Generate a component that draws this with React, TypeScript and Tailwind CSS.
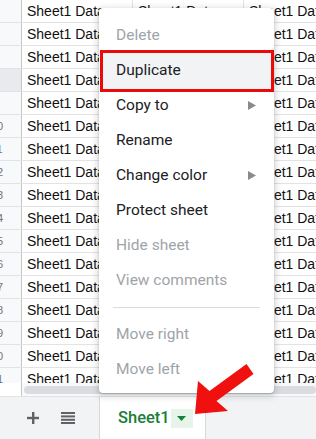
import React from "react";

const rowNumbers = [5, 6, 7, 8, 9, 10, 11, 12, 13, 14, 15, 16, 17, 18, 19, 20, 21];

type Item = { label: string; disabled?: boolean; sub?: boolean };

const topItems: Item[] = [
  { label: "Delete", disabled: true },
  { label: "Duplicate" },
  { label: "Copy to", sub: true },
  { label: "Rename" },
  { label: "Change color", sub: true },
  { label: "Protect sheet" },
  { label: "Hide sheet", disabled: true },
  { label: "View comments", disabled: true },
];

const bottomItems: Item[] = [
  { label: "Move right", disabled: true },
  { label: "Move left", disabled: true },
];

function MenuItem({ label, disabled, sub }: Item) {
  return (
    <div
      className={`relative flex h-[35px] items-center justify-between pl-[17px] pr-[18px] text-[15.5px] ${
        disabled ? "text-[#a0a4a8]" : "text-[#202124]"
      }`}
    >
      <span>{label}</span>
      {sub && (
        <svg width="8" height="9" viewBox="0 0 8 9">
          <polygon points="0,0 8,4.5 0,9" fill="#8a8a8a" />
        </svg>
      )}
    </div>
  );
}

function Cell() {
  return (
    <div className="flex h-full w-[111px] shrink-0 items-center overflow-hidden whitespace-nowrap border-r border-[#e2e3e3] pl-[5px]">
      Sheet1 Data
    </div>
  );
}

export default function App() {
  return (
    <div
      className="relative flex h-[439px] w-[316px] flex-col overflow-hidden bg-white"
      style={{ fontFamily: "Roboto, 'Liberation Sans', sans-serif" }}
    >
      {/* grid */}
      <div
        className="h-[383px] overflow-hidden text-[14px] text-[#111]"
        style={{ fontFamily: "'Liberation Sans', Arial, sans-serif" }}
      >
        {rowNumbers.map((n, i) => (
          <div key={n} className="flex h-[23px] border-b border-[#e2e3e3]">
            <div
              className={`h-full w-[22px] shrink-0 overflow-hidden border-r border-[#c4c7c5] ${
                i === 3 ? "bg-[#e8eaed]" : "bg-[#f8f9fa]"
              }`}
            >
              <div className="ml-[-26px] flex h-full w-[46px] items-center justify-center text-[11px] text-[#6f7378]">
                {n}
              </div>
            </div>
            <Cell />
            <Cell />
            <Cell />
          </div>
        ))}
      </div>

      {/* horizontal scrollbar */}
      <div className="flex h-[13px] items-center">
        <div className="h-full w-[22px] shrink-0 border-r border-[#c4c7c5] bg-white" />
        <div className="flex h-full flex-1 items-center bg-[#f8f9fa] pl-[2px]">
          <div className="h-[8px] w-full rounded-full bg-[#dadce0]" />
        </div>
      </div>

      {/* sheet tab bar */}
      <div className="flex flex-1 items-center border-t border-[#e2e3e3] bg-[#f1f3f4]">
        <div className="flex w-[99px] items-center pl-[27px]">
          <svg width="12" height="12" viewBox="0 0 12 12">
            <rect x="5" y="0" width="2.4" height="12" fill="#5f6368" />
            <rect x="0" y="4.8" width="12" height="2.4" fill="#5f6368" />
          </svg>
          <svg className="ml-[22px]" width="14" height="12" viewBox="0 0 14 12">
            <rect x="0" y="0" width="14" height="2" fill="#5f6368" />
            <rect x="0" y="3.4" width="14" height="2" fill="#5f6368" />
            <rect x="0" y="6.8" width="14" height="2" fill="#5f6368" />
            <rect x="0" y="10" width="14" height="2" fill="#5f6368" />
          </svg>
        </div>
        <div className="flex h-full w-[107px] items-center border-x border-[#d6d8da] bg-white pl-[18px]">
          <span className="text-[16.5px] font-medium text-[#188038]">Sheet1</span>
          <div className="ml-[1px] flex h-[19px] w-[22px] items-center justify-center bg-[#e6f4ea]">
            <svg width="9" height="5" viewBox="0 0 9 5">
              <polygon points="0,0 9,0 4.5,5" fill="#188038" />
            </svg>
          </div>
        </div>
      </div>

      {/* context menu */}
      <div className="absolute left-[99px] top-[8px] w-[175px] rounded-[4px] bg-white pb-[6px] pt-[10px] shadow-[0_2px_6px_2px_rgba(60,64,67,0.18),0_1px_2px_rgba(60,64,67,0.25)]">
        <div className="absolute left-[1px] top-[42px] h-[42px] w-[174px] border-[3px] border-[#ea0a0a] bg-[#f1f3f4]" />
        {topItems.map((it) => (
          <MenuItem key={it.label} {...it} />
        ))}
        <div className="mx-[14px] my-[9px] h-px bg-[#dadce0]" />
        {bottomItems.map((it) => (
          <MenuItem key={it.label} {...it} />
        ))}
      </div>

      {/* annotation arrow */}
      <svg className="absolute left-[185px] top-[355px]" width="80" height="70" viewBox="185 355 80 70">
        <polygon
          points="195,414 198,381 209.5,391.1 246.5,364.1 253.5,373.9 216.5,400.9 228,411"
          fill="#f01010"
        />
      </svg>
    </div>
  );
}
